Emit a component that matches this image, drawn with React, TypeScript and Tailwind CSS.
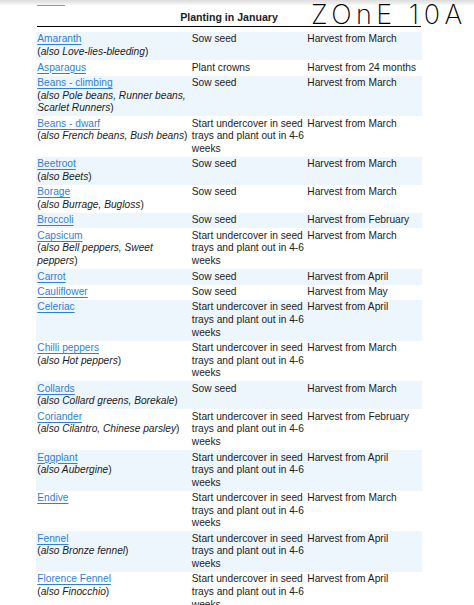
import React from 'react'

type Crop = {
  name: string
  also?: string
  action: string
  harvest: string
}

const sow = 'Sow seed'
const tray = 'Start undercover in seed trays and plant out in 4-6 weeks'

const crops: Crop[] = [
  { name: 'Amaranth', also: 'Love-lies-bleeding', action: sow, harvest: 'Harvest from March' },
  { name: 'Asparagus', action: 'Plant crowns', harvest: 'Harvest from 24 months' },
  { name: 'Beans - climbing', also: 'Pole beans, Runner beans, Scarlet Runners', action: sow, harvest: 'Harvest from March' },
  { name: 'Beans - dwarf', also: 'French beans, Bush beans', action: tray, harvest: 'Harvest from March' },
  { name: 'Beetroot', also: 'Beets', action: sow, harvest: 'Harvest from March' },
  { name: 'Borage', also: 'Burrage, Bugloss', action: sow, harvest: 'Harvest from March' },
  { name: 'Broccoli', action: sow, harvest: 'Harvest from February' },
  { name: 'Capsicum', also: 'Bell peppers, Sweet peppers', action: tray, harvest: 'Harvest from March' },
  { name: 'Carrot', action: sow, harvest: 'Harvest from April' },
  { name: 'Cauliflower', action: sow, harvest: 'Harvest from May' },
  { name: 'Celeriac', action: tray, harvest: 'Harvest from April' },
  { name: 'Chilli peppers', also: 'Hot peppers', action: tray, harvest: 'Harvest from March' },
  { name: 'Collards', also: 'Collard greens, Borekale', action: sow, harvest: 'Harvest from March' },
  { name: 'Coriander', also: 'Cilantro, Chinese parsley', action: tray, harvest: 'Harvest from February' },
  { name: 'Eggplant', also: 'Aubergine', action: tray, harvest: 'Harvest from April' },
  { name: 'Endive', action: tray, harvest: 'Harvest from March' },
  { name: 'Fennel', also: 'Bronze fennel', action: tray, harvest: 'Harvest from April' },
  { name: 'Florence Fennel', also: 'Finocchio', action: tray, harvest: 'Harvest from April' },
]

export default function App() {
  return (
    <div
      className="relative min-h-screen bg-white text-[#1c1c1c] text-[10.2px] leading-[12.6px]"
      style={{ fontFamily: '"Liberation Sans", Arial, sans-serif' }}
    >
      {/* bottom edge of the previous section, scrolled off */}
      <div className="h-[5px] bg-gradient-to-b from-[#dcdcdc] to-[#f7f7f7]" />
      <div className="h-[2px] overflow-hidden pl-[37px]">
        <div className="w-[28px] h-[1px] bg-[#6a9fe0]" />
      </div>

      {/* handwritten note */}
      <div
        className="absolute left-[311px] top-[0px] whitespace-nowrap text-[27px] leading-[30px] tracking-[4.5px] font-extralight text-black"
        style={{ fontFamily: 'Inter, "DejaVu Sans", sans-serif' }}
      >
        ZOnE 10<span className="tracking-normal">A</span>
      </div>

      <div className="ml-[36px] w-[386px]">
        <div className="pt-[4px] pb-[2px] text-center font-bold text-[10.6px] leading-[13px] border-b-[1.5px] border-black mx-[1px]">
          Planting in January
        </div>

        <table className="mt-[5px] w-[386px] table-fixed border-collapse">
          <colgroup>
            <col className="w-[154.5px]" />
            <col className="w-[115.5px]" />
            <col className="w-[116px]" />
          </colgroup>
          <tbody>
            {crops.map((c, i) => (
              <tr key={c.name} className={i % 2 === 0 ? 'bg-[#eef6fd]' : 'bg-white'}>
                <td className="align-top px-[1.3px] py-[1.45px]">
                  <a href="#" className="text-[#2f7fd8] underline underline-offset-[1.5px]">
                    {c.name}
                  </a>
                  {c.also && (
                    <div>
                      (<i>also {c.also}</i>)
                    </div>
                  )}
                </td>
                <td className="align-top px-[1.3px] py-[1.45px]">{c.action}</td>
                <td className="align-top px-[1.3px] py-[1.45px]">{c.harvest}</td>
              </tr>
            ))}
          </tbody>
        </table>
      </div>
    </div>
  )
}
